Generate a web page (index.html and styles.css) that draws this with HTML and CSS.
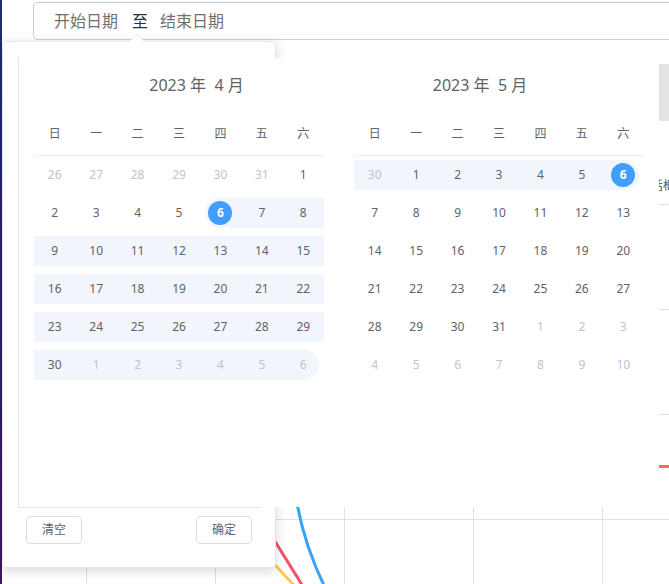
FILE: index.html
```html
<!DOCTYPE html>
<html lang="zh-CN">
<head>
<meta charset="utf-8">
<title>日期范围选择</title>
<link rel="stylesheet" href="styles.css">
</head>
<body>
<div class="page">
  <div class="strip"></div>
  <div class="main">
    <div class="range-input">
      <span class="ph">开始日期</span><span class="sep">至</span><span class="ph">结束日期</span>
    </div>
    <svg class="chart" width="667" height="544" viewBox="2 40 667 544">
      <g stroke="#e0e0e0" stroke-width="1">
        <line x1="40" y1="204.5" x2="669" y2="204.5"/>
        <line x1="40" y1="309.5" x2="669" y2="309.5"/>
        <line x1="40" y1="414.5" x2="669" y2="414.5"/>
        <line x1="40" y1="519.5" x2="669" y2="519.5"/>
        <line x1="86.5" y1="150" x2="86.5" y2="584"/>
        <line x1="215.5" y1="150" x2="215.5" y2="584"/>
        <line x1="344.5" y1="150" x2="344.5" y2="584"/>
        <line x1="473.5" y1="150" x2="473.5" y2="584"/>
        <line x1="602.5" y1="150" x2="602.5" y2="584"/>
      </g>
      <rect x="659" y="64" width="20" height="57" fill="#e4e4e6"/>
      <text x="651" y="190" font-size="12" fill="#555" font-family="Noto Sans CJK SC, sans-serif">话框</text>
      <line x1="640" y1="466.5" x2="669" y2="466.5" stroke="#ff6a4d" stroke-width="3"/>
      <polyline points="250,538 276,566 296.4,588" fill="none" stroke="#fbc65b" stroke-width="3"/>
      <polyline points="250,501.5 276,543 304,588" fill="none" stroke="#f4516c" stroke-width="3"/>
      <polyline points="293,467 294.6,487 297.7,507 302.3,527 308.3,547 315.8,567 324.7,587" fill="none" stroke="#36a3f7" stroke-width="3"/>
    </svg>
  </div>

  <div class="picker">
    <svg class="arrow" width="16" height="9" viewBox="0 0 16 9">
      <path d="M0 9 L8 1 L16 9 Z" fill="#fff"/>
      <path d="M0.5 8.5 L8 1 L15.5 8.5" fill="none" stroke="#e4e7ed" stroke-width="1"/>
    </svg>
    <div class="frame">
      <div class="panel">
        <div class="month">
          <div class="cal-head left">2023 年&nbsp; 4 月</div>
          <div class="wk"><span>日</span><span>一</span><span>二</span><span>三</span><span>四</span><span>五</span><span>六</span></div>
          <div class="week">
            <div class="d g"><span>26</span></div><div class="d g"><span>27</span></div><div class="d g"><span>28</span></div><div class="d g"><span>29</span></div><div class="d g"><span>30</span></div><div class="d g"><span>31</span></div><div class="d"><span>1</span></div>
          </div>
          <div class="week">
            <div class="d"><span>2</span></div><div class="d"><span>3</span></div><div class="d"><span>4</span></div><div class="d"><span>5</span></div><div class="d in s"><span class="sel">6</span></div><div class="d in"><span>7</span></div><div class="d in"><span>8</span></div>
          </div>
          <div class="week">
            <div class="d in"><span>9</span></div><div class="d in"><span>10</span></div><div class="d in"><span>11</span></div><div class="d in"><span>12</span></div><div class="d in"><span>13</span></div><div class="d in"><span>14</span></div><div class="d in"><span>15</span></div>
          </div>
          <div class="week">
            <div class="d in"><span>16</span></div><div class="d in"><span>17</span></div><div class="d in"><span>18</span></div><div class="d in"><span>19</span></div><div class="d in"><span>20</span></div><div class="d in"><span>21</span></div><div class="d in"><span>22</span></div>
          </div>
          <div class="week">
            <div class="d in"><span>23</span></div><div class="d in"><span>24</span></div><div class="d in"><span>25</span></div><div class="d in"><span>26</span></div><div class="d in"><span>27</span></div><div class="d in"><span>28</span></div><div class="d in"><span>29</span></div>
          </div>
          <div class="week">
            <div class="d in"><span>30</span></div><div class="d in g"><span>1</span></div><div class="d in g"><span>2</span></div><div class="d in g"><span>3</span></div><div class="d in g"><span>4</span></div><div class="d in g"><span>5</span></div><div class="d in g e"><span>6</span></div>
          </div>
        </div>
        <div class="month">
          <div class="cal-head right">2023 年&nbsp; 5 月</div>
          <div class="wk"><span>日</span><span>一</span><span>二</span><span>三</span><span>四</span><span>五</span><span>六</span></div>
          <div class="week">
            <div class="d in g"><span>30</span></div><div class="d in"><span>1</span></div><div class="d in"><span>2</span></div><div class="d in"><span>3</span></div><div class="d in"><span>4</span></div><div class="d in"><span>5</span></div><div class="d in e"><span class="sel">6</span></div>
          </div>
          <div class="week">
            <div class="d"><span>7</span></div><div class="d"><span>8</span></div><div class="d"><span>9</span></div><div class="d"><span>10</span></div><div class="d"><span>11</span></div><div class="d"><span>12</span></div><div class="d"><span>13</span></div>
          </div>
          <div class="week">
            <div class="d"><span>14</span></div><div class="d"><span>15</span></div><div class="d"><span>16</span></div><div class="d"><span>17</span></div><div class="d"><span>18</span></div><div class="d"><span>19</span></div><div class="d"><span>20</span></div>
          </div>
          <div class="week">
            <div class="d"><span>21</span></div><div class="d"><span>22</span></div><div class="d"><span>23</span></div><div class="d"><span>24</span></div><div class="d"><span>25</span></div><div class="d"><span>26</span></div><div class="d"><span>27</span></div>
          </div>
          <div class="week">
            <div class="d"><span>28</span></div><div class="d"><span>29</span></div><div class="d"><span>30</span></div><div class="d"><span>31</span></div><div class="d g"><span>1</span></div><div class="d g"><span>2</span></div><div class="d g"><span>3</span></div>
          </div>
          <div class="week">
            <div class="d g"><span>4</span></div><div class="d g"><span>5</span></div><div class="d g"><span>6</span></div><div class="d g"><span>7</span></div><div class="d g"><span>8</span></div><div class="d g"><span>9</span></div><div class="d g"><span>10</span></div>
          </div>
        </div>
      </div>
    </div>
    <div class="footer">
      <button class="btn" type="button">清空</button>
      <button class="btn" type="button">确定</button>
    </div>
  </div>
</div>
</body>
</html>
```

FILE: styles.css
```css
body {
  margin: 0;
  background: #fff;
  font-family: "Noto Sans", "Noto Sans CJK SC", sans-serif;
}

.page {
  position: relative;
  width: 669px;
  height: 584px;
  overflow: hidden;
  display: flex;
}

.strip {
  flex: none;
  width: 2px;
  background: linear-gradient(180deg, #1c2c80, #40155a);
}

.main {
  flex: 1;
  min-width: 0;
  display: flex;
  flex-direction: column;
}

.range-input {
  flex: none;
  margin: 2px 0 0 31px;
  width: 700px;
  height: 38px;
  box-sizing: border-box;
  border: 1px solid #c5d0e2;
  border-radius: 4px;
  display: flex;
  align-items: center;
  padding-left: 20px;
  font-size: 16px;
  line-height: 20px;
  color: #6f6f72;
}

.sep {
  margin: 0 12px 0 14px;
  color: #303133;
}

.chart {
  display: block;
  flex: none;
}

.picker {
  position: absolute;
  left: 2px;
  top: 41px;
  width: 274px;
  height: 527px;
  box-sizing: border-box;
  border: 1px solid #e4e7ed;
  border-radius: 4px;
  background: #fff;
  box-shadow: 0 3px 12px rgba(0, 0, 0, 0.16);
}

.arrow {
  position: absolute;
  left: 126px;
  top: -9px;
  display: block;
}

.frame {
  margin: 16px 0 0 15px;
  width: 242px;
  height: 450px;
  box-sizing: border-box;
  border-left: 1px solid #e4e4e4;
  border-bottom: 1px solid #e4e4e4;
}

.panel {
  width: 640px;
  height: 449px;
  background: #fff;
  display: flex;
  position: relative;
}

.month {
  width: 320px;
  flex: none;
  padding: 0 15px;
  box-sizing: border-box;
}

.cal-head {
  height: 54px;
  box-sizing: border-box;
  padding-top: 13px;
  font-size: 16px;
  line-height: 28px;
  color: #606266;
  text-align: center;
  white-space: nowrap;
}

.cal-head.left {
  padding-left: 35px;
}

.cal-head.right {
  padding-right: 38px;
}

.wk {
  display: grid;
  grid-template-columns: repeat(7, 1fr);
  height: 43px;
  line-height: 43px;
  border-bottom: 1px solid #ebeef5;
  font-size: 12px;
  color: #606266;
  text-align: center;
}

.week {
  display: grid;
  grid-template-columns: repeat(7, 1fr);
}

.d {
  position: relative;
  height: 38px;
  display: flex;
  align-items: center;
  justify-content: center;
  font-size: 12px;
  color: #606266;
}

.d.g {
  color: #c0c4cc;
}

.d.in::before {
  content: "";
  position: absolute;
  top: 4px;
  bottom: 4px;
  left: 0;
  right: 0;
  background: #f2f6fc;
}

.d.s::before {
  left: 5px;
  border-radius: 15px 0 0 15px;
}

.d.e::before {
  right: 5px;
  border-radius: 0 15px 15px 0;
}

.d span {
  position: relative;
  line-height: 24px;
}

.d span.sel {
  width: 24px;
  height: 24px;
  border-radius: 50%;
  background: #409eff;
  color: #fff;
  font-weight: 700;
  text-align: center;
}

.footer {
  display: flex;
  justify-content: space-between;
  padding: 8px 23px 0 23px;
}

.btn {
  width: 56px;
  height: 28px;
  box-sizing: border-box;
  padding: 0;
  border: 1px solid #dcdfe6;
  border-radius: 4px;
  background: #fff;
  font-family: "Noto Sans", "Noto Sans CJK SC", sans-serif;
  font-size: 12px;
  line-height: 26px;
  color: #606266;
}
```
